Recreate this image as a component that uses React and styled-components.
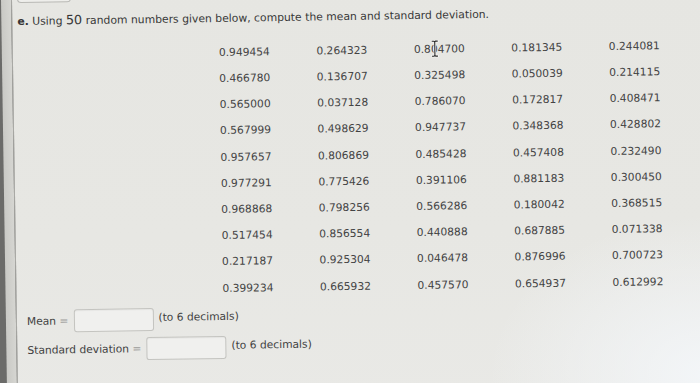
import React from "react";
import styled, { createGlobalStyle } from "styled-components";

// Global
const GlobalStyle = createGlobalStyle`
  html, body {
    margin: 0;
    padding: 0;
    background: #6b6b69;
    overflow: hidden;
  }
  * {
    box-sizing: border-box;
  }
`;

const COLUMNS = [
  ["0.949454", "0.466780", "0.565000", "0.567999", "0.957657", "0.977291", "0.968868", "0.517454", "0.217187", "0.399234"],
  ["0.264323", "0.136707", "0.037128", "0.498629", "0.806869", "0.775426", "0.798256", "0.856554", "0.925304", "0.665932"],
  ["0.804700", "0.325498", "0.786070", "0.947737", "0.485428", "0.391106", "0.566286", "0.440888", "0.046478", "0.457570"],
  ["0.181345", "0.050039", "0.172817", "0.348368", "0.457408", "0.881183", "0.180042", "0.687885", "0.876996", "0.654937"],
  ["0.244081", "0.214115", "0.408471", "0.428802", "0.232490", "0.300450", "0.368515", "0.071338", "0.700723", "0.612992"],
];

// the mouse pointer sits over the first value of the third column
const CURSOR_INDEX = 20;

// Styled
const Viewport = styled.div`
  width: 700px;
  height: 383px;
  overflow: hidden;
`;

// the screen was photographed slightly tilted
const Photo = styled.div`
  width: 740px;
  height: 423px;
  margin: -20px;
  display: flex;
  transform: rotate(-0.88deg);
  font-family: "DejaVu Sans", Verdana, sans-serif;
`;

const Edge = styled.div`
  width: 24px;
  background: #6b6b69;
`;

const Bezel = styled.div`
  width: 11px;
  background: linear-gradient(90deg, #c9c9c5, #d6d6d2);
  border-right: 1px solid #a9a9a5;
`;

const Page = styled.div`
  flex: 1;
  padding-left: 5px;
  background:
    radial-gradient(ellipse 220px 160px at 690px 400px, rgba(244, 247, 250, 0.9), rgba(244, 247, 250, 0)),
    linear-gradient(180deg, #e6e6e2 0%, #e7e7e3 60%, #e9e9e6 100%);
  color: #3a3a3a;
`;

const TopButton = styled.div`
  width: 54px;
  height: 16px;
  margin-top: 2px;
  border: 1px solid #b9b9b5;
  border-radius: 4px;
  background: #eeeeeb;
`;

const Heading = styled.p`
  margin: 10px 0 0;
  font-size: 10.8px;
  line-height: 16px;
  color: #363636;
  b {
    font-weight: 700;
  }
  .num {
    font-size: 12.8px;
  }
`;

const NumberGrid = styled.div`
  display: grid;
  grid-auto-flow: column;
  grid-template-rows: repeat(10, 26.2px);
  grid-template-columns: repeat(5, 97.5px);
  margin: 12.3px 0 0 201px;
  font-size: 10.7px;
  color: #434343;
`;

const Cell = styled.span`
  position: relative;
  display: flex;
  align-items: center;
`;

const Cursor = styled.svg`
  position: absolute;
  left: 17px;
  top: 50%;
  width: 8px;
  height: 18px;
  transform: translateY(-50%);
`;

const Answers = styled.div`
  display: flex;
  flex-direction: column;
  gap: 6px;
  margin: 5.7px 0 0 5px;
  font-size: 10.7px;
  color: #404040;
`;

const AnswerRow = styled.div`
  display: flex;
  align-items: center;
  gap: 5px;
  height: 23px;
`;

const Label = styled.span`
  white-space: nowrap;
  .eq {
    color: #9c9c9a;
  }
`;

const Box = styled.input`
  width: 80px;
  height: 23px;
  border: 1px solid #c4c4c0;
  border-radius: 3px;
  background: #f0f0ee;
  outline: none;
  box-shadow: inset 0 1px 1px rgba(0, 0, 0, 0.04);
`;

const Note = styled.span`
  white-space: nowrap;
  margin-top: -3px;
`;

const IBeam = () => (
  <Cursor viewBox="0 0 8 18">
    <path
      d="M1 1.5h2.2L4 2.3l.8-.8H7M4 2.3v13.4M1 16.5h2.2l.8-.8.8.8H7"
      fill="none"
      stroke="#f4f4f2"
      strokeWidth="2.6"
      strokeLinecap="round"
    />
    <path d="M1 1.5h2.2L4 2.3l.8-.8H7M4 2.3v13.4M1 16.5h2.2l.8-.8.8.8H7" fill="none" stroke="#2a2a2a" strokeWidth="1.1" />
  </Cursor>
);

export default function App() {
  return (
    <Viewport>
      <GlobalStyle />
      <Photo>
        <Edge />
        <Bezel />
        <Page>
          <TopButton />
          <Heading>
            <b>e.</b> Using <span className="num">50</span> random numbers given below, compute the mean and standard
            deviation.
          </Heading>
          <NumberGrid>
            {COLUMNS.flat().map((v, i) => (
              <Cell key={i}>
                {v}
                {i === CURSOR_INDEX && <IBeam />}
              </Cell>
            ))}
          </NumberGrid>
          <Answers>
            <AnswerRow>
              <Label>
                Mean <span className="eq">=</span>
              </Label>
              <Box type="text" />
              <Note>(to 6 decimals)</Note>
            </AnswerRow>
            <AnswerRow>
              <Label>
                Standard deviation <span className="eq">=</span>
              </Label>
              <Box type="text" />
              <Note>(to 6 decimals)</Note>
            </AnswerRow>
          </Answers>
        </Page>
      </Photo>
    </Viewport>
  );
}
